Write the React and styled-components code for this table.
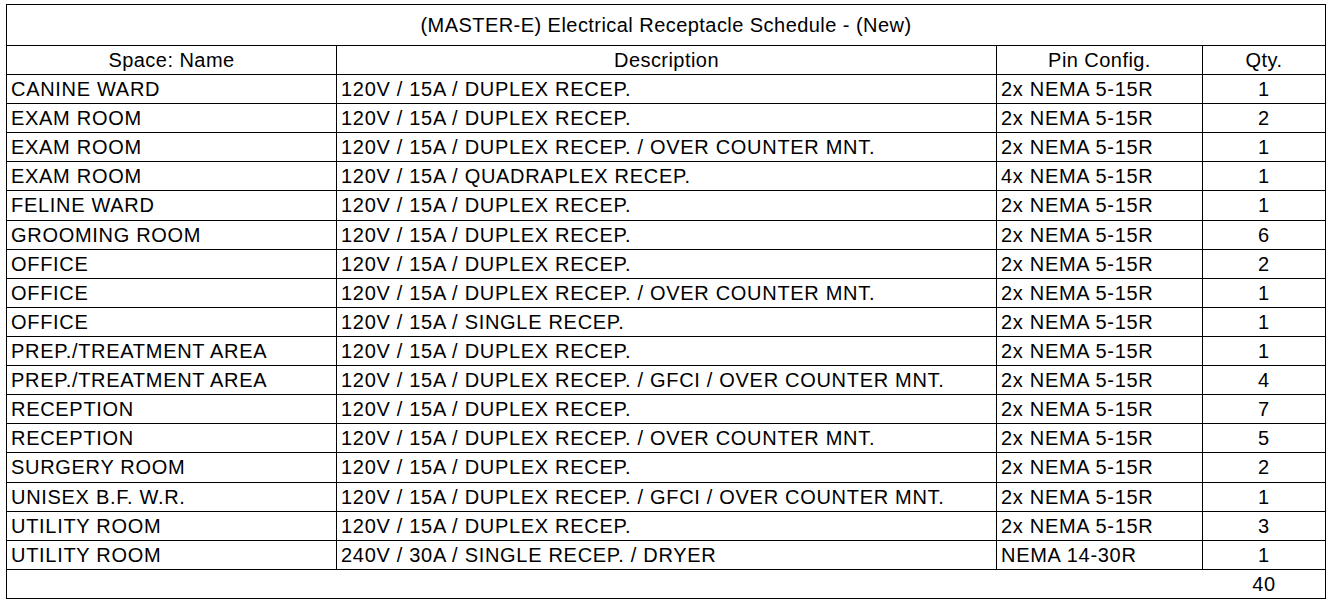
import React from "react";
import styled, { createGlobalStyle } from "styled-components";

const GlobalStyle = createGlobalStyle`
	html, body {
		margin: 0;
		padding: 0;
		background: #fff;
	}
	body {
		font-family: "Liberation Sans", Arial, sans-serif;
		color: #000;
	}
`;

const Page = styled.div`
	padding: 4px 0 0 6px;
`;

const Schedule = styled.div`
	display: grid;
	grid-template-columns: 330px 660px 206px 123px;
	grid-template-rows: 41px 29px repeat(${props => props.rows}, 29.12px) 29px;
	width: 1320px;
	box-sizing: border-box;
	border-top: 1px solid #000;
	border-left: 1px solid #000;
	font-size: 20px;
`;

const Cell = styled.div`
	box-sizing: border-box;
	display: flex;
	align-items: center;
	justify-content: ${props => props.align === "center" ? "center" : "flex-start"};
	padding: 0 4px;
	border-right: 1px solid #000;
	border-bottom: 1px solid #000;
	white-space: nowrap;
	overflow: hidden;
	line-height: 1;
	letter-spacing: 0.7px;
`;

const TitleCell = styled(Cell)`
	grid-column: 1 / -1;
	justify-content: center;
	padding-bottom: 1px;
	letter-spacing: 0.45px;
`;

const HeaderCell = styled(Cell)`
	justify-content: center;
	letter-spacing: 0.45px;
`;

const BlankCell = styled(Cell)`
	grid-column: 1 / 4;
	border-right: none;
`;

const rows = [
	["CANINE WARD", "120V / 15A / DUPLEX RECEP.", "2x NEMA 5-15R", 1],
	["EXAM ROOM", "120V / 15A / DUPLEX RECEP.", "2x NEMA 5-15R", 2],
	["EXAM ROOM", "120V / 15A / DUPLEX RECEP. / OVER COUNTER MNT.", "2x NEMA 5-15R", 1],
	["EXAM ROOM", "120V / 15A / QUADRAPLEX RECEP.", "4x NEMA 5-15R", 1],
	["FELINE WARD", "120V / 15A / DUPLEX RECEP.", "2x NEMA 5-15R", 1],
	["GROOMING ROOM", "120V / 15A / DUPLEX RECEP.", "2x NEMA 5-15R", 6],
	["OFFICE", "120V / 15A / DUPLEX RECEP.", "2x NEMA 5-15R", 2],
	["OFFICE", "120V / 15A / DUPLEX RECEP. / OVER COUNTER MNT.", "2x NEMA 5-15R", 1],
	["OFFICE", "120V / 15A / SINGLE RECEP.", "2x NEMA 5-15R", 1],
	["PREP./TREATMENT AREA", "120V / 15A / DUPLEX RECEP.", "2x NEMA 5-15R", 1],
	["PREP./TREATMENT AREA", "120V / 15A / DUPLEX RECEP. / GFCI / OVER COUNTER MNT.", "2x NEMA 5-15R", 4],
	["RECEPTION", "120V / 15A / DUPLEX RECEP.", "2x NEMA 5-15R", 7],
	["RECEPTION", "120V / 15A / DUPLEX RECEP. / OVER COUNTER MNT.", "2x NEMA 5-15R", 5],
	["SURGERY ROOM", "120V / 15A / DUPLEX RECEP.", "2x NEMA 5-15R", 2],
	["UNISEX B.F. W.R.", "120V / 15A / DUPLEX RECEP. / GFCI / OVER COUNTER MNT.", "2x NEMA 5-15R", 1],
	["UTILITY ROOM", "120V / 15A / DUPLEX RECEP.", "2x NEMA 5-15R", 3],
	["UTILITY ROOM", "240V / 30A / SINGLE RECEP. / DRYER", "NEMA 14-30R", 1],
];

const App = () => {
	const total = rows.reduce((sum, r) => sum + r[3], 0);
	return (
		<Page>
			<GlobalStyle />
			<Schedule rows={rows.length}>
				<TitleCell>(MASTER-E) Electrical Receptacle Schedule - (New)</TitleCell>
				<HeaderCell>Space: Name</HeaderCell>
				<HeaderCell>Description</HeaderCell>
				<HeaderCell>Pin Config.</HeaderCell>
				<HeaderCell>Qty.</HeaderCell>
				{rows.map((r, i) => (
					<React.Fragment key={`row-${i}`}>
						<Cell>{r[0]}</Cell>
						<Cell>{r[1]}</Cell>
						<Cell>{r[2]}</Cell>
						<Cell align="center">{r[3]}</Cell>
					</React.Fragment>
				))}
				<BlankCell />
				<Cell align="center">{total}</Cell>
			</Schedule>
		</Page>
	);
};

export default App;
